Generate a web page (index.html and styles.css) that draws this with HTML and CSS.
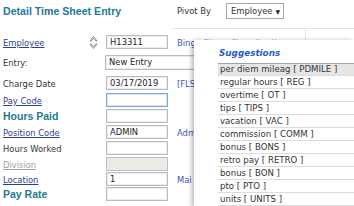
FILE: index.html
```html
<!DOCTYPE html>
<html>
<head>
<meta charset="utf-8">
<link rel="stylesheet" href="styles.css">
</head>
<body>
<div class="page">
  <div class="header">
    <div class="title">Detail Time Sheet Entry</div>
    <div class="pivot">
      <span class="pivot-label">Pivot By</span>
      <span class="select">Employee <span class="caret">▼</span></span>
    </div>
  </div>
  <div class="form">
    <div class="panel"><div class="panel-cell"></div></div>

    <a class="label link r1">Employee</a>
    <span class="spin r1"><svg width="9" height="15" viewBox="0 0 9 15"><path d="M1 6 L4.5 1.5 L8 6 L6.8 6 L4.5 3.2 L2.2 6 Z" fill="none" stroke="#777" stroke-width="0.8" stroke-linejoin="round"/><path d="M1 9 L4.5 13.5 L8 9 L6.8 9 L4.5 11.8 L2.2 9 Z" fill="none" stroke="#777" stroke-width="0.8" stroke-linejoin="round"/></svg></span>
    <span class="input r1">H13311</span>
    <span class="side first r1">Bingo <span class="faded">Dingo Chandler K</span></span>

    <span class="label r2">Entry:</span>
    <span class="input wide r2">New Entry</span>

    <span class="label r3">Charge Date</span>
    <span class="input r3">03/17/2019</span>
    <span class="side r3">[FLS</span>

    <a class="label link r4">Pay Code</a>
    <span class="input focus r4"></span>

    <span class="label big r5">Hours Paid</span>
    <span class="input r5"></span>

    <a class="label link r6">Position Code</a>
    <span class="input r6">ADMIN</span>
    <span class="side r6">Adm</span>

    <span class="label r7">Hours Worked</span>
    <span class="input r7"></span>

    <a class="label link disabled r8">Division</a>
    <span class="input off r8"></span>

    <a class="label link r9">Location</a>
    <span class="input r9">1</span>
    <span class="side r9">Mai</span>

    <span class="label big r10">Pay Rate</span>
    <span class="input r10"></span>
  </div>

  <div class="popup">
    <div class="popup-title">Suggestions</div>
    <ul class="list">
      <li class="item active">per diem mileag [ PDMILE ]</li>
      <li class="item">regular hours [ REG ]</li>
      <li class="item">overtime [ OT ]</li>
      <li class="item">tips [ TIPS ]</li>
      <li class="item">vacation [ VAC ]</li>
      <li class="item">commission [ COMM ]</li>
      <li class="item">bonus [ BONS ]</li>
      <li class="item">retro pay [ RETRO ]</li>
      <li class="item">bonus [ BON ]</li>
      <li class="item">pto [ PTO ]</li>
      <li class="item">units [ UNITS ]</li>
    </ul>
  </div>
</div>
</body>
</html>
```

FILE: styles.css
```css
html, body {
  margin: 0;
  padding: 0;
  background: #ffffff;
}
body {
  font-family: "DejaVu Sans", Verdana, sans-serif;
  font-size: 8.4px;
  color: #333333;
  width: 354px;
  height: 206px;
  overflow: hidden;
}
.page {
  position: relative;
  width: 354px;
  height: 206px;
  overflow: hidden;
}
.header {
  display: flex;
  align-items: center;
  height: 22px;
  padding: 0 0 0 3px;
}
.title {
  width: 174px;
  color: #23789a;
  font-family: "Liberation Sans", Arial, sans-serif;
  font-size: 10.6px;
  font-weight: bold;
}
.pivot {
  display: flex;
  align-items: center;
}
.pivot-label {
  width: 49px;
  color: #333;
}
.select {
  display: inline-flex;
  align-items: center;
  box-sizing: border-box;
  width: 58px;
  height: 16px;
  padding-left: 4px;
  border: 1px solid #a9a9a9;
  color: #333;
}
.caret {
  font-size: 6px;
  margin-left: 3px;
  color: #222;
}
.form {
  display: grid;
  grid-template-columns: 86px 17px 71px 177px;
  grid-template-rows: 20px 21px 17px 16px 16px 16px 16px 15px 15px 15px;
  padding: 13px 0 0 3px;
}
.r1 { grid-row: 1; }
.r2 { grid-row: 2; }
.r3 { grid-row: 3; }
.r4 { grid-row: 4; }
.r5 { grid-row: 5; }
.r6 { grid-row: 6; }
.r7 { grid-row: 7; }
.r8 { grid-row: 8; }
.r9 { grid-row: 9; }
.r10 { grid-row: 10; }
.panel {
  grid-column: 4;
  grid-row: 1 / -1;
  margin-top: -7px;
  margin-left: -4px;
  border-top: 1px solid #e4e4e4;
  display: flex;
}
.panel-cell {
  width: 132px;
  height: 12px;
  border-right: 1px solid #e4e4e4;
}
.label {
  grid-column: 1;
  align-self: start;
  line-height: 14px;
  margin-top: 1px;
  white-space: nowrap;
}
.link {
  color: #2d3f8e;
  text-decoration: underline;
}
.disabled {
  color: #a3a3a3;
}
.big {
  color: #1f7a8e;
  font-family: "Liberation Sans", Arial, sans-serif;
  font-size: 10.5px;
  font-weight: bold;
  margin-top: 0;
}
.spin {
  grid-column: 2;
  align-self: start;
  height: 15px;
}
.spin svg { display: block; }
.input {
  grid-column: 3;
  align-self: start;
  box-sizing: border-box;
  width: 62px;
  height: 14px;
  border: 1px solid #bdbdbd;
  box-shadow: inset 0 0 0 1px #ececec;
  padding-left: 3px;
  line-height: 12px;
  color: #222;
  white-space: nowrap;
  background: #fff;
}
.wide {
  width: 110px;
  height: 15px;
  line-height: 13px;
  margin-left: -1px;
}
.focus {
  border-color: #7aa3dd;
  box-shadow: inset 0 0 0 1px #dce8f8;
}
.off {
  background: #ebebe4;
}
.side {
  grid-column: 4;
  align-self: start;
  line-height: 14px;
  margin-top: 1px;
  color: #4256c0;
  white-space: nowrap;
}
.side.first {
  width: 110px;
  height: 6px;
  overflow: visible;
}
.faded {
  color: #a9b1de;
}
.popup {
  position: absolute;
  left: 194px;
  top: 40px;
  right: 0;
  bottom: 0;
  background: #fff;
  box-shadow: -2px 1px 5px rgba(0, 0, 0, 0.3);
  overflow: hidden;
}
.popup-title {
  padding: 8px 0 0 25px;
  height: 15px;
  font-size: 8.8px;
  font-weight: bold;
  font-style: italic;
  color: #2a5cc4;
}
.list {
  list-style: none;
  margin: 0 0 0 24px;
  padding: 0;
}
.item {
  box-sizing: border-box;
  height: 13px;
  line-height: 12px;
  padding-left: 2px;
  border-bottom: 1px solid #dcdcdc;
  font-size: 8.6px;
  color: #333;
  white-space: nowrap;
}
.active {
  background: #e6e6e6;
  box-shadow: inset 0 1px 0 #9aa3b4;
}
```
